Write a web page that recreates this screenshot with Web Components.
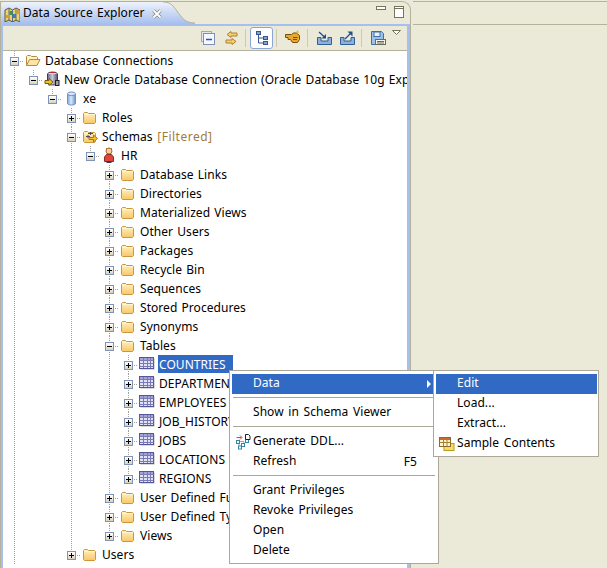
<!DOCTYPE html>
<html>
<head>
<meta charset="utf-8">
<title>Data Source Explorer</title>
<style>
  html, body { margin: 0; height: 100%; overflow: hidden; }
  body { font: 12px "Noto Sans", "DejaVu Sans", sans-serif; word-spacing: 1px; letter-spacing: .05px; color: #000; background: #ebe9d7; }
</style>
</head>
<body>
<workbench-page>
  <eclipse-view slot="view" title-text="Data Source Explorer">
    <tool-button slot="tools" icon="collapse"></tool-button>
    <tool-button slot="tools" icon="link"></tool-button>
    <tool-sep slot="tools"></tool-sep>
    <tool-button slot="tools" icon="hierarchy" checked></tool-button>
    <tool-sep slot="tools"></tool-sep>
    <tool-button slot="tools" icon="hand"></tool-button>
    <tool-sep slot="tools"></tool-sep>
    <tool-button slot="tools" icon="import"></tool-button>
    <tool-button slot="tools" icon="export"></tool-button>
    <tool-sep slot="tools"></tool-sep>
    <tool-button slot="tools" icon="save"></tool-button>
    <tool-button slot="tools" icon="dropdown" narrow></tool-button>

    <tree-item icon="folder-open" open more label="Database Connections">
      <tree-item icon="connection" open label="New Oracle Database Connection (Oracle Database 10g Express Edition)">
        <tree-item icon="database" open label="xe">
          <tree-item icon="folder" closed label="Roles"></tree-item>
          <tree-item icon="folder-filter" open label="Schemas" decoration="[Filtered]">
            <tree-item icon="person" open label="HR">
              <tree-item icon="folder" closed label="Database Links"></tree-item>
              <tree-item icon="folder" closed label="Directories"></tree-item>
              <tree-item icon="folder" closed label="Materialized Views"></tree-item>
              <tree-item icon="folder" closed label="Other Users"></tree-item>
              <tree-item icon="folder" closed label="Packages"></tree-item>
              <tree-item icon="folder" closed label="Recycle Bin"></tree-item>
              <tree-item icon="folder" closed label="Sequences"></tree-item>
              <tree-item icon="folder" closed label="Stored Procedures"></tree-item>
              <tree-item icon="folder" closed label="Synonyms"></tree-item>
              <tree-item icon="folder" open label="Tables">
                <tree-item icon="table" closed selected label="COUNTRIES"></tree-item>
                <tree-item icon="table" closed label="DEPARTMENTS"></tree-item>
                <tree-item icon="table" closed label="EMPLOYEES"></tree-item>
                <tree-item icon="table" closed label="JOB_HISTORY"></tree-item>
                <tree-item icon="table" closed label="JOBS"></tree-item>
                <tree-item icon="table" closed label="LOCATIONS"></tree-item>
                <tree-item icon="table" closed label="REGIONS"></tree-item>
              </tree-item>
              <tree-item icon="folder" closed label="User Defined Functions"></tree-item>
              <tree-item icon="folder" closed label="User Defined Types"></tree-item>
              <tree-item icon="folder" closed label="Views"></tree-item>
            </tree-item>
          </tree-item>
          <tree-item icon="folder" closed label="Users"></tree-item>
        </tree-item>
      </tree-item>
    </tree-item>
  </eclipse-view>
  <editor-area slot="editor"></editor-area>

  <popup-menu slot="overlay" style="left:229px;top:370px;width:205px">
    <menu-item active arrow>Data</menu-item>
    <menu-sep></menu-sep>
    <menu-item>Show in Schema Viewer</menu-item>
    <menu-sep></menu-sep>
    <menu-item icon="ddl">Generate DDL...</menu-item>
    <menu-item shortcut="F5">Refresh</menu-item>
    <menu-sep></menu-sep>
    <menu-item>Grant Privileges</menu-item>
    <menu-item>Revoke Privileges</menu-item>
    <menu-item>Open</menu-item>
    <menu-item>Delete</menu-item>
  </popup-menu>
  <popup-menu slot="overlay" style="left:433px;top:370px;width:161px">
    <menu-item active>Edit</menu-item>
    <menu-item>Load...</menu-item>
    <menu-item>Extract...</menu-item>
    <menu-item icon="sample">Sample Contents</menu-item>
  </popup-menu>
</workbench-page>

<script>
const FOLDER = `<path d="M1.5 13.5v-9l1-1h3l1 1h6l1 1v8l-1 1h-10z" fill="url(#fold)" stroke="#c9973f"/><path d="M2 5.5h11" stroke="#fff6d0"/>`;
const GRADS = `<defs>
  <linearGradient id="fold" x1="0" y1="0" x2="0" y2="1"><stop offset="0" stop-color="#fff2c4"/><stop offset="1" stop-color="#f9c765"/></linearGradient>
  <linearGradient id="cyl" x1="0" y1="0" x2="1" y2="0"><stop offset="0" stop-color="#7fa6d8"/><stop offset=".45" stop-color="#d8e8f8"/><stop offset="1" stop-color="#6f94c8"/></linearGradient>
  <linearGradient id="srv" x1="0" y1="0" x2="1" y2="0"><stop offset="0" stop-color="#6a6a88"/><stop offset=".5" stop-color="#c8c8d8"/><stop offset="1" stop-color="#50506a"/></linearGradient>
</defs>`;
const ICONS = {
  folder: FOLDER,
  'folder-open': `<path d="M1.5 13.5v-9l1-1h3l1 1h5l1 1v2" fill="#fff2c4" stroke="#b98a3e"/><path d="M1.5 13.5l3-6h10.5l-3 6z" fill="#fde3a5" stroke="#b98a3e"/>`,
  'folder-filter': FOLDER + `<path d="M6 5.5h5M8.500 4v3M4 8.500h4M6 7v3" stroke="#4c4c6c"/><path d="M7 9.500h4.500v-2.500l4 3.500-4 3.500v-2.500h-4.500z" fill="#f7c42c" stroke="#a8761c"/>`,
  connection: `<ellipse cx="8.500" cy="3" rx="5" ry="2" fill="#d8d8e8" stroke="#3c3c56"/><path d="M3.500 3v9c0 1 2 2 5 2s5-1 5-2v-9" fill="url(#srv)" stroke="#3c3c56"/><path d="M6 1.500h5" stroke="#b03030"/><path d="M1 9.500h4v-2l4 3.500-4 3.500v-2h-4z" fill="#f3c516" stroke="#7a5a10"/><rect x="11.500" y="9.500" width="3.500" height="5" fill="#a0a0ac" stroke="#222"/>`,
  database: `<path d="M4.500 4v9.500c0 .8 1.700 1.500 4 1.500s4-.7 4-1.500v-9.500z" fill="url(#cyl)" stroke="#6e8fc0"/><ellipse cx="8.500" cy="3.800" rx="4" ry="1.800" fill="#dbe9f8" stroke="#6e8fc0"/>`,
  person: `<circle cx="8" cy="4" r="3" fill="#f6cfa0" stroke="#9b6b34"/><path d="M3.500 14.500v-4.500l2-2.500h5l2 2.500v4.500z" fill="#e0443a" stroke="#8f2a24"/><path d="M5.500 15h5" stroke="#3a3a58" stroke-width="2"/><path d="M5 1.500h6" stroke="#b9863c"/>`,
  table: `<rect x="1.500" y="2.500" width="14" height="11" fill="#b4b4bc"/><rect x=".5" y="1.500" width="14" height="11" fill="#e2e2f6" stroke="#55559a"/><path d="M1 2h13v2h-13z" fill="#a4a4d4"/><path d="M.5 4.500h14M.5 7.500h14M.5 10.500h14M4.500 2v10M8.500 2v10M11.500 2v10" stroke="#7a7ab8" fill="none"/>`,
  ddl: `<path d="M1.500 3.500h5M5 1.500l2 2-2 2" stroke="#c0504d" fill="none"/><path d="M4 7.500v4M4 7.500h5M9 8v5" stroke="#89a7c8" fill="none"/><rect x="1.500" y="6.500" width="3" height="3" fill="#fff" stroke="#2f87a8"/><rect x="6.500" y="9.500" width="3" height="3" fill="#fff" stroke="#2f87a8"/><rect x="3.500" y="12" width="3" height="3" fill="#fff" stroke="#2f87a8"/><rect x="10.500" y="5.500" width="3" height="3" fill="#fff" stroke="#2f87a8"/><path d="M10.500 .5h3l1.500 1.500v3.500h-4.500z" fill="#fff" stroke="#222"/>`,
  sample: `<rect x="5" y="7.500" width="10" height="7" fill="#f9dc5c" stroke="#b59a28"/><rect x=".5" y="1.500" width="11" height="9" fill="#fdf3d0" stroke="#8c6a2b"/><path d="M1 2h10v2h-10z" fill="#cc6a2c"/><path d="M.5 6.500h11M4.500 4v6M8 4v6" stroke="#a5822f"/>`,
  map: `<path d="M1 4l4-2 3.500 2 3.500-2 4 2v12l-4-2-3.500 2-3.500-2-4 2z" fill="#ecd36a" stroke="#5a5a32"/><path d="M5 2v12M8.500 4v12M12 2v12" stroke="#4f6d8f"/><path d="M5.500 5h3v4h-3z" fill="#3f8f5b"/><path d="M9 8h3v4h-3z" fill="#3c7cc0"/><path d="M2 9h3v3h-3z" fill="#d8a02a"/><path d="M12.500 4h3v4h-3z" fill="#d8a02a"/>`,
  collapse: `<rect x="1.500" y="1.500" width="10" height="10" fill="#e6e6ee" stroke="#a2a8c4"/><rect x="3.500" y="3.500" width="11" height="11" fill="#f6f8ff" stroke="#7f8fb8"/><path d="M6 9.500h6" stroke="#2d56a6" stroke-width="1.500"/>`,
  link: `<path d="M8 1.500l-4 3 4 3v-1.500h6v-3h-6z" fill="#f4cf72" stroke="#b0812c"/><path d="M9 8.500l4 3-4 3v-1.500h-6v-3h6z" fill="#f4cf72" stroke="#b0812c"/>`,
  hierarchy: `<path d="M4.500 5v8h5M4.500 8h5" stroke="#37588f" fill="none"/><rect x="2.500" y="1.500" width="4" height="3" fill="#8aa2c8" stroke="#37588f"/><rect x="9.500" y="6.500" width="4" height="3" fill="#8aa2c8" stroke="#37588f"/><rect x="9.500" y="11.500" width="4" height="3" fill="#8aa2c8" stroke="#37588f"/>`,
  hand: `<path d="M.5 4.500h6l2-1.500h3l3 2.500v4l-2 3h-5l-2-3h-2.500v-2h-2.500z" fill="#e9a92c" stroke="#7d4a12"/><path d="M8 7.500h4.500M8 9.500h4" stroke="#7d4a12"/><path d="M12.500.5v3M11 2h3" stroke="#e9b93c"/>`,
  import: `<path d="M1.500 7.500v7h14v-7h-3.500v3.500h-7v-3.500z" fill="#8fb0d8" stroke="#2f5f96"/><path d="M3 2l6 5.500" stroke="#20508c" fill="none" stroke-width="1.300"/><path d="M5.500 8.500h4.500v-4.500z" fill="#20508c"/>`,
  export: `<path d="M1.500 7.500v7h14v-7h-3.500v3.500h-7v-3.500z" fill="#8fb0d8" stroke="#2f5f96"/><path d="M6 9l6-6" stroke="#20508c" fill="none" stroke-width="1.300"/><path d="M8.500 1.500h5v5z" fill="#20508c"/>`,
  save: `<path d="M1.500 1.500h10l2 2v11h-12z" fill="#9fc0e4" stroke="#3f6ea8"/><rect x="4" y="2" width="6" height="4.500" fill="#e8f0fa" stroke="#3f6ea8"/><rect x="5.500" y="9.500" width="10" height="5" fill="#f4f4ea" stroke="#6a6a5a"/><path d="M7 11.500h7M7 13h7" stroke="#6a6a5a"/>`,
  dropdown: `<path d="M2.500 3.500h8l-4 4z" fill="#fff" stroke="#77735f"/>`
};

customElements.define('app-icon', class AppIcon extends HTMLElement {
  constructor() {
    super();
    this.attachShadow({ mode: 'open' });
  }
  connectedCallback() {
    const name = this.getAttribute('name');
    this.shadowRoot.innerHTML = `
      <style>
        :host { display: block; width: 16px; height: 16px; flex: none; }
        svg { display: block; }
      </style>
      <svg width="16" height="16" viewBox="0 0 16 16">${GRADS}${ICONS[name] || ''}</svg>`;
  }
});

customElements.define('workbench-page', class WorkbenchPage extends HTMLElement {
  constructor() {
    super();
    this.attachShadow({ mode: 'open' });
    this.shadowRoot.innerHTML = `
      <style>
        :host { display: flex; position: relative; width: 607px; height: 568px; overflow: hidden; }
      </style>
      <slot name="view"></slot>
      <slot name="editor"></slot>
      <slot name="overlay"></slot>`;
  }
});

customElements.define('eclipse-view', class EclipseView extends HTMLElement {
  constructor() {
    super();
    this.attachShadow({ mode: 'open' });
    this.shadowRoot.innerHTML = `
      <style>
        :host {
          display: flex; flex-direction: column; flex: none; box-sizing: border-box;
          width: 411px; height: 568px; margin-top: 1px;
          border-top: 1px solid #b5b29c; border-left: 1px solid #b5b29c; border-right: 1px solid #b5b29c;
          border-top-right-radius: 9px;
        }
        .head { display: flex; height: 22px; flex: none; }
        .tab {
          display: flex; align-items: center; width: 162px; box-sizing: border-box;
          padding: 0 0 1px 3px; gap: 3px;
          background: linear-gradient(#eef2fc, #a6bfee);
          border-top-left-radius: 5px;
        }
        .tab app-icon { margin-top: 2px; }
        .curve { display: block; flex: none; }
        .close { flex: none; margin: 2px 0 0 auto; display: block; }
        .spacer { flex: 1; }
        .win { display: flex; gap: 8px; padding: 4px 6px 0 0; }
        .frame {
          display: flex; flex-direction: column; flex: 1; min-height: 0; box-sizing: border-box;
          border: solid #a6bfee; border-width: 2px 3px 0 2px;
          background: #fff;
        }
        .tools {
          display: flex; justify-content: flex-end; align-items: center; flex: none;
          height: 24px; background: #ebe9d7; border-bottom: 1px solid #b5b29c;
        }
        .tree { flex: 1; min-height: 0; overflow: hidden; padding: 0 0 0 2px; background: #fff; white-space: nowrap; }
      </style>
      <div class="head">
        <div class="tab">
          <app-icon name="map"></app-icon>
          <span class="title"></span>
          <svg class="close" width="12" height="12" viewBox="0 0 12 12">
            <path d="M2.500 2.500l7 7M9.500 2.500l-7 7" stroke="#8a8a8a" stroke-width="3.400"/>
            <path d="M2.500 2.500l7 7M9.500 2.500l-7 7" stroke="#fff" stroke-width="1.800"/>
          </svg>
        </div>
        <svg class="curve" width="32" height="22" viewBox="0 0 32 22">
          <defs><linearGradient id="tabfill" x1="0" y1="0" x2="0" y2="1"><stop offset="0" stop-color="#eef2fc"/><stop offset="1" stop-color="#a6bfee"/></linearGradient></defs>
          <path d="M0 0C8 0 10 4 14 9C19 16 22 21 32 21V22H0Z" fill="url(#tabfill)"/>
          <path d="M0 0C8 0 10 4 14 9C19 16 22 21 32 21" fill="none" stroke="#b5b29c"/>
        </svg>
        <div class="spacer"></div>
        <div class="win">
          <svg width="10" height="5" viewBox="0 0 10 5"><rect x=".5" y=".5" width="9" height="3" fill="#fff" stroke="#77735f"/></svg>
          <svg width="10" height="13" viewBox="0 0 10 13"><rect x=".5" y=".5" width="9" height="11" fill="#fff" stroke="#77735f"/><path d="M0 2.500h10" stroke="#77735f"/></svg>
        </div>
      </div>
      <div class="frame">
        <div class="tools"><slot name="tools"></slot></div>
        <div class="tree"><slot></slot></div>
      </div>`;
    this.shadowRoot.querySelector('.title').textContent = this.getAttribute('title-text');
  }
});

customElements.define('editor-area', class EditorArea extends HTMLElement {
  constructor() {
    super();
    this.attachShadow({ mode: 'open' });
    this.shadowRoot.innerHTML = `
      <style>
        :host { display: block; flex: 1; margin-left: 2px; padding-top: 1px; }
        .strip { height: 22px; border: solid #b5b29c; border-width: 1px 0; }
      </style>
      <div class="strip"></div>`;
  }
});

customElements.define('tool-button', class ToolButton extends HTMLElement {
  constructor() {
    super();
    this.attachShadow({ mode: 'open' });
  }
  connectedCallback() {
    this.shadowRoot.innerHTML = `
      <style>
        :host { display: flex; align-items: center; justify-content: center; box-sizing: border-box; width: 23px; height: 22px; }
        :host([narrow]) { width: 18px; align-items: flex-start; }
        :host([checked]) { background: #fff; border: 1px solid #8ba6d6; border-radius: 3px; }
      </style>
      <app-icon name="${this.getAttribute('icon')}"></app-icon>`;
  }
});

customElements.define('tool-sep', class ToolSep extends HTMLElement {
  constructor() {
    super();
    this.attachShadow({ mode: 'open' });
    this.shadowRoot.innerHTML = `
      <style>
        :host { display: block; box-sizing: border-box; width: 8px; height: 18px; padding-left: 3px; }
        div { width: 1px; height: 100%; background: #cfc9b4; }
      </style>
      <div></div>`;
  }
});

const DOTS = 'repeating-linear-gradient(#a0a0a0 0 1px, transparent 1px 2px)';
const DOTS_H = 'repeating-linear-gradient(90deg, #a0a0a0 0 1px, transparent 1px 2px)';

customElements.define('tree-item', class TreeItem extends HTMLElement {
  constructor() {
    super();
    this.attachShadow({ mode: 'open' });
  }
  connectedCallback() {
    const a = n => this.getAttribute(n);
    const sign = this.hasAttribute('closed') ? 'closed' : 'open';
    this.shadowRoot.innerHTML = `
      <style>
        :host { display: block; }
        :host(:not(:last-child)), :host([more]) {
          background: ${DOTS} 9px 0 / 1px 100% no-repeat;
        }
        .row { display: flex; align-items: flex-start; height: 19px; }
        .twisty {
          flex: none; position: relative; width: 19px; height: 19px;
          background: ${DOTS} 9px 0 / 1px 10px no-repeat, ${DOTS_H} 9px 10px / 10px 1px no-repeat;
        }
        .box {
          position: absolute; left: 5px; top: 6px; width: 7px; height: 7px;
          border: 1px solid #7f93b8; background: linear-gradient(#fff, #d8d2bc);
        }
        .box::before { content: ""; position: absolute; left: 1px; top: 3px; width: 5px; height: 1px; background: #000; }
        .box.closed::after { content: ""; position: absolute; left: 3px; top: 1px; width: 1px; height: 5px; background: #000; }
        app-icon { margin: 1px 3px 0 1px; }
        .label { height: 18px; line-height: 19px; padding: 0 2px 0 1px; }
        :host([selected]) .label { background: #316ac5; color: #fff; padding-right: 7px; }
        .deco { color: #a07c3a; letter-spacing: .5px; }
        .kids { padding-left: 19px; }
      </style>
      <div class="row">
        <span class="twisty"><span class="box ${sign}"></span></span>
        <app-icon name="${a('icon')}"></app-icon>
        <span class="label"></span>
      </div>
      <div class="kids"><slot></slot></div>`;
    const label = this.shadowRoot.querySelector('.label');
    label.textContent = a('label');
    if (a('decoration')) {
      const d = document.createElement('span');
      d.className = 'deco';
      d.textContent = ' ' + a('decoration');
      label.append(d);
    }
  }
});

customElements.define('popup-menu', class PopupMenu extends HTMLElement {
  constructor() {
    super();
    this.attachShadow({ mode: 'open' });
    this.shadowRoot.innerHTML = `
      <style>
        :host {
          display: block; position: absolute; background: #fff; word-spacing: 1.5px;
          border: 1px solid #aca899; padding: 2px 1px 2px 2px;
        }
      </style>
      <slot></slot>`;
  }
});

customElements.define('menu-item', class MenuItem extends HTMLElement {
  constructor() {
    super();
    this.attachShadow({ mode: 'open' });
  }
  connectedCallback() {
    const icon = this.getAttribute('icon');
    const shortcut = this.getAttribute('shortcut');
    this.shadowRoot.innerHTML = `
      <style>
        :host { display: flex; align-items: center; height: 20px; }
        :host(:first-child) { margin-top: 1px; }
        :host([active]) { background: #316ac5; color: #fff; }
        .gutter { flex: none; width: 21px; display: flex; justify-content: center; }
        .text { flex: 1; line-height: 16px; margin-top: -2px; }
        .key { margin: -2px 20px 0 0; }
        .arrow { width: 0; height: 0; margin-right: 6px; border: 4px solid transparent; border-left: 4px solid #fff; border-right: 0; }
      </style>
      <span class="gutter">${icon ? `<app-icon name="${icon}"></app-icon>` : ''}</span>
      <span class="text"><slot></slot></span>
      ${shortcut ? `<span class="key">${shortcut}</span>` : ''}
      ${this.hasAttribute('arrow') ? '<span class="arrow"></span>' : ''}`;
  }
});

customElements.define('menu-sep', class MenuSep extends HTMLElement {
  constructor() {
    super();
    this.attachShadow({ mode: 'open' });
    this.shadowRoot.innerHTML = `
      <style>
        :host { display: block; box-sizing: border-box; height: 9px; padding: 3px 2px 5px 1px; }
        div { height: 1px; background: #aca899; }
      </style>
      <div></div>`;
  }
});
</script>
</body>
</html>
